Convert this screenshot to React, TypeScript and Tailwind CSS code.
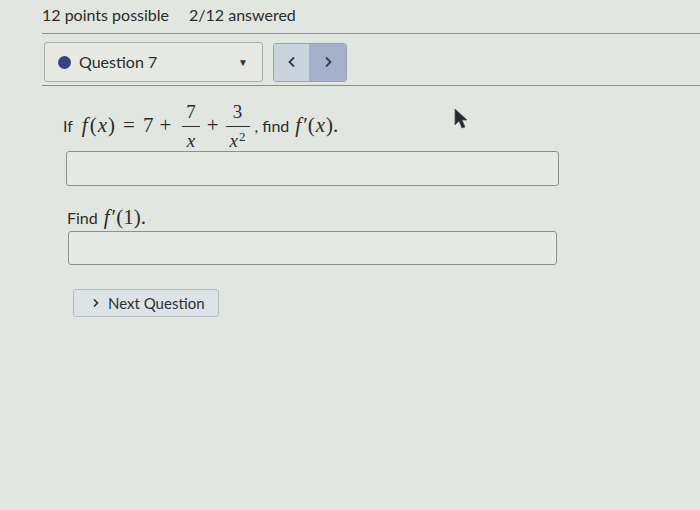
import React from 'react'

const ui = { fontFamily: 'Lato, "Open Sans", sans-serif' }
const serif = { fontFamily: '"Liberation Serif", "DejaVu Serif", serif' }

function Frac({ num, den }: { num: React.ReactNode; den: React.ReactNode }) {
  return (
    <span className="mx-[5px] inline-flex flex-col items-center align-middle leading-none">
      <span className="px-[4px] pb-[5px] text-[19px]">{num}</span>
      <span className="w-full border-t border-[#333]" />
      <span className="px-[4px] pt-[4px] text-[19px]">{den}</span>
    </span>
  )
}

function Cursor() {
  return (
    <svg className="absolute left-[453px] top-[108px]" width="16" height="22" viewBox="0 0 16 22">
      <path d="M2 1 L2 17 L6 13 L9 20 L12 19 L9 12 L14 12 Z" fill="#2a2a2e" stroke="#55575c" strokeWidth="0.8" />
    </svg>
  )
}

// f with a little room before the bracket, like KaTeX spacing
function F() {
  return <i className="mr-[2px]">f</i>
}

export default function App() {
  return (
    <div className="relative h-[510px] w-[700px] overflow-hidden bg-[#e2e6e0] text-[#2b2b2b]" style={ui}>
      <div className="pl-[42px] pt-[2px]">
        <div className="flex h-[26px] items-center gap-[20px] text-[16px]">
          <span>12 points possible</span>
          <span>2/12 answered</span>
        </div>
        <div className="mt-[5px] border-t border-[#8a8d8c]" />
        <div className="flex items-center gap-[10px] pl-[2px] pt-[8px]">
          <div className="flex h-[40px] w-[219px] items-center rounded-[3px] border border-[#a9aca9] bg-[#e6e9e4] pl-[13px] pr-[14px]">
            <span className="h-[13px] w-[13px] rounded-full bg-[#3d4280]" />
            <span className="ml-[8px] text-[16px]">Question 7</span>
            <span className="ml-auto text-[10px] text-[#333]">▼</span>
          </div>
          <div className="flex h-[39px] w-[74px] overflow-hidden rounded-[3px] border border-[#9aa3b5]">
            <div className="flex w-[35px] items-center justify-center bg-[#cad4df] text-[#333b4f]">
              <svg width="10" height="12" viewBox="0 0 10 12">
                <path d="M7 1.5 L2.5 6 L7 10.5" fill="none" stroke="currentColor" strokeWidth="1.8" />
              </svg>
            </div>
            <div className="flex flex-1 items-center justify-center bg-[#a6b0cb] text-[#333b4f]">
              <svg width="10" height="12" viewBox="0 0 10 12">
                <path d="M3 1.5 L7.5 6 L3 10.5" fill="none" stroke="currentColor" strokeWidth="1.8" />
              </svg>
            </div>
          </div>
        </div>
        <div className="mt-[3px] border-t border-[#8a8d8c]" />

        <div className="pl-[21px] pt-[17px]">
          <div className="flex h-[46px] items-center text-[16px]">
            <span className="mr-[9px]">If</span>
            <span className="text-[21px]" style={serif}>
              <F />(<i className="mx-[1px]">x</i>)<span className="mx-[8px]">=</span>7<span className="mx-[6px]">+</span>
            </span>
            <span style={serif}>
              <Frac num="7" den={<i>x</i>} />
            </span>
            <span className="mx-[2px] text-[21px]" style={serif}>+</span>
            <span style={serif}>
              <Frac
                num="3"
                den={
                  <span>
                    <i>x</i>
                    <sup className="ml-[1px] text-[13px]">2</sup>
                  </span>
                }
              />
            </span>
            <span>, find</span>
            <span className="ml-[6px] text-[21px]" style={serif}>
              <F />
              <span>′</span>(<i className="mx-[1px]">x</i>).
            </span>
          </div>
          <div className="ml-[3px] mt-[2px] h-[35px] w-[493px] rounded-[3px] border border-[#8c8f8d] bg-[#e6e9e4]" />

          <div className="ml-[4px] mt-[20px] flex h-[24px] items-center text-[16px]">
            <span>Find</span>
            <span className="ml-[6px] text-[21px]" style={serif}>
              <F />
              <span>′</span>(1).
            </span>
          </div>
          <div className="ml-[5px] mt-[1px] h-[34px] w-[489px] rounded-[3px] border border-[#8c8f8d] bg-[#e6e9e4]" />

          <div className="ml-[10px] mt-[24px] flex h-[28px] w-[146px] items-center rounded-[3px] border border-[#b6bcc0] bg-[#dde3e6] pl-[18px] text-[15px] text-[#2e3136]">
            <svg width="8" height="10" viewBox="0 0 8 10" className="mr-[8px]">
              <path d="M2 1.5 L5.5 5 L2 8.5" fill="none" stroke="currentColor" strokeWidth="1.7" />
            </svg>
            Next Question
          </div>
        </div>
      </div>
      <Cursor />
    </div>
  )
}
